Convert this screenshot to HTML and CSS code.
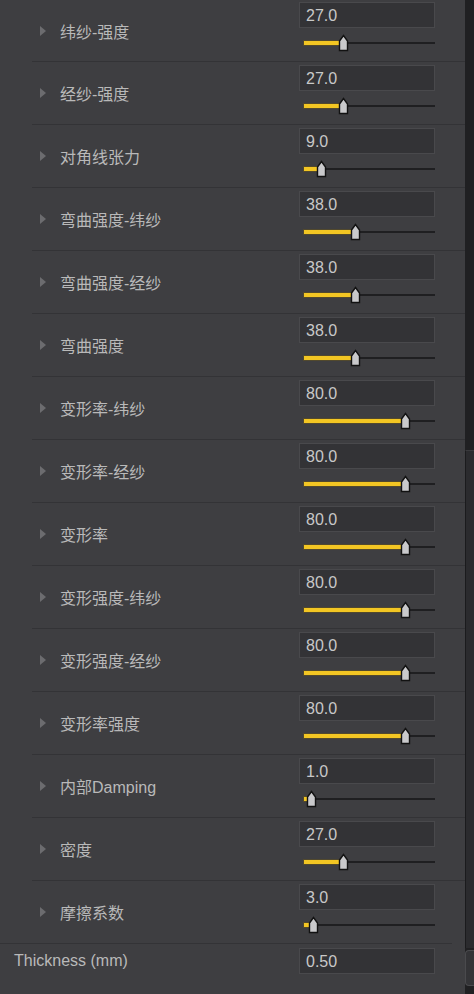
FILE: index.html
```html
<!DOCTYPE html>
<html lang="zh">
    <head>
        <title>Fabric Properties</title>
        <meta charset="utf-8" name="viewport" content="width=device-width, initial-scale=1">
        <link rel="stylesheet" href="styles.css">
    </head>
    <body>
        <div id="page">
        <div class="panel">
            <div class="group">
                <div class="row">
                    <div class="name"><span class="arrow"></span>纬纱-强度</div>
                    <div class="ctl">
                        <div class="box">27.0</div>
                        <div class="slider"><div class="fill" style="width:39px"></div><svg class="thumb" style="left:34px" width="11" height="18" viewBox="0 0 11 18"><polygon points="1.5,7 5.5,1.5 9.5,7 9.5,16.5 1.5,16.5"/></svg></div>
                    </div>
                </div>
                <div class="row">
                    <div class="name"><span class="arrow"></span>经纱-强度</div>
                    <div class="ctl">
                        <div class="box">27.0</div>
                        <div class="slider"><div class="fill" style="width:39px"></div><svg class="thumb" style="left:34px" width="11" height="18" viewBox="0 0 11 18"><polygon points="1.5,7 5.5,1.5 9.5,7 9.5,16.5 1.5,16.5"/></svg></div>
                    </div>
                </div>
                <div class="row">
                    <div class="name"><span class="arrow"></span>对角线张力</div>
                    <div class="ctl">
                        <div class="box">9.0</div>
                        <div class="slider"><div class="fill" style="width:17px"></div><svg class="thumb" style="left:12px" width="11" height="18" viewBox="0 0 11 18"><polygon points="1.5,7 5.5,1.5 9.5,7 9.5,16.5 1.5,16.5"/></svg></div>
                    </div>
                </div>
                <div class="row">
                    <div class="name"><span class="arrow"></span>弯曲强度-纬纱</div>
                    <div class="ctl">
                        <div class="box">38.0</div>
                        <div class="slider"><div class="fill" style="width:51px"></div><svg class="thumb" style="left:46px" width="11" height="18" viewBox="0 0 11 18"><polygon points="1.5,7 5.5,1.5 9.5,7 9.5,16.5 1.5,16.5"/></svg></div>
                    </div>
                </div>
                <div class="row">
                    <div class="name"><span class="arrow"></span>弯曲强度-经纱</div>
                    <div class="ctl">
                        <div class="box">38.0</div>
                        <div class="slider"><div class="fill" style="width:51px"></div><svg class="thumb" style="left:46px" width="11" height="18" viewBox="0 0 11 18"><polygon points="1.5,7 5.5,1.5 9.5,7 9.5,16.5 1.5,16.5"/></svg></div>
                    </div>
                </div>
                <div class="row">
                    <div class="name"><span class="arrow"></span>弯曲强度</div>
                    <div class="ctl">
                        <div class="box">38.0</div>
                        <div class="slider"><div class="fill" style="width:51px"></div><svg class="thumb" style="left:46px" width="11" height="18" viewBox="0 0 11 18"><polygon points="1.5,7 5.5,1.5 9.5,7 9.5,16.5 1.5,16.5"/></svg></div>
                    </div>
                </div>
                <div class="row">
                    <div class="name"><span class="arrow"></span>变形率-纬纱</div>
                    <div class="ctl">
                        <div class="box">80.0</div>
                        <div class="slider"><div class="fill" style="width:101px"></div><svg class="thumb" style="left:96px" width="11" height="18" viewBox="0 0 11 18"><polygon points="1.5,7 5.5,1.5 9.5,7 9.5,16.5 1.5,16.5"/></svg></div>
                    </div>
                </div>
                <div class="row">
                    <div class="name"><span class="arrow"></span>变形率-经纱</div>
                    <div class="ctl">
                        <div class="box">80.0</div>
                        <div class="slider"><div class="fill" style="width:101px"></div><svg class="thumb" style="left:96px" width="11" height="18" viewBox="0 0 11 18"><polygon points="1.5,7 5.5,1.5 9.5,7 9.5,16.5 1.5,16.5"/></svg></div>
                    </div>
                </div>
                <div class="row">
                    <div class="name"><span class="arrow"></span>变形率</div>
                    <div class="ctl">
                        <div class="box">80.0</div>
                        <div class="slider"><div class="fill" style="width:101px"></div><svg class="thumb" style="left:96px" width="11" height="18" viewBox="0 0 11 18"><polygon points="1.5,7 5.5,1.5 9.5,7 9.5,16.5 1.5,16.5"/></svg></div>
                    </div>
                </div>
                <div class="row">
                    <div class="name"><span class="arrow"></span>变形强度-纬纱</div>
                    <div class="ctl">
                        <div class="box">80.0</div>
                        <div class="slider"><div class="fill" style="width:101px"></div><svg class="thumb" style="left:96px" width="11" height="18" viewBox="0 0 11 18"><polygon points="1.5,7 5.5,1.5 9.5,7 9.5,16.5 1.5,16.5"/></svg></div>
                    </div>
                </div>
                <div class="row">
                    <div class="name"><span class="arrow"></span>变形强度-经纱</div>
                    <div class="ctl">
                        <div class="box">80.0</div>
                        <div class="slider"><div class="fill" style="width:101px"></div><svg class="thumb" style="left:96px" width="11" height="18" viewBox="0 0 11 18"><polygon points="1.5,7 5.5,1.5 9.5,7 9.5,16.5 1.5,16.5"/></svg></div>
                    </div>
                </div>
                <div class="row">
                    <div class="name"><span class="arrow"></span>变形率强度</div>
                    <div class="ctl">
                        <div class="box">80.0</div>
                        <div class="slider"><div class="fill" style="width:101px"></div><svg class="thumb" style="left:96px" width="11" height="18" viewBox="0 0 11 18"><polygon points="1.5,7 5.5,1.5 9.5,7 9.5,16.5 1.5,16.5"/></svg></div>
                    </div>
                </div>
                <div class="row">
                    <div class="name"><span class="arrow"></span>内部Damping</div>
                    <div class="ctl">
                        <div class="box">1.0</div>
                        <div class="slider"><div class="fill" style="width:6px"></div><svg class="thumb" style="left:2px" width="11" height="18" viewBox="0 0 11 18"><polygon points="1.5,7 5.5,1.5 9.5,7 9.5,16.5 1.5,16.5"/></svg></div>
                    </div>
                </div>
                <div class="row">
                    <div class="name"><span class="arrow"></span>密度</div>
                    <div class="ctl">
                        <div class="box">27.0</div>
                        <div class="slider"><div class="fill" style="width:39px"></div><svg class="thumb" style="left:34px" width="11" height="18" viewBox="0 0 11 18"><polygon points="1.5,7 5.5,1.5 9.5,7 9.5,16.5 1.5,16.5"/></svg></div>
                    </div>
                </div>
                <div class="row">
                    <div class="name"><span class="arrow"></span>摩擦系数</div>
                    <div class="ctl">
                        <div class="box">3.0</div>
                        <div class="slider"><div class="fill" style="width:8px"></div><svg class="thumb" style="left:4px" width="11" height="18" viewBox="0 0 11 18"><polygon points="1.5,7 5.5,1.5 9.5,7 9.5,16.5 1.5,16.5"/></svg></div>
                    </div>
                </div>
            </div>

            <div class="row top">
                <div class="name">Thickness (mm)</div>
                <div class="ctl">
                    <div class="box">0.50</div>
                </div>
            </div>
        </div>

        <div class="scroll">
            <div class="s-top"></div>
            <div class="s-track"></div>
            <div class="s-end"></div>
        </div>
        </div>
    </body>
</html>
```

FILE: styles.css
```css
body{
    margin: 0;
    background: #3e3e41;
    font-family: "Liberation Sans", "Noto Sans CJK SC", sans-serif;
    font-size: 16px;
    color: #b9b9b9;
}
#page{
    display: flex;
    height: 994px;
    overflow: hidden;
}
.panel{
    flex: 1;
}
.group .row{
    margin-left: 32px;
    border-bottom: 1px solid #333336;
    height: 62px;
}
.group .row:first-child{
    height: 61px;
}
.group .row:last-child{
    border-bottom: none;
}
.row{
    display: grid;
    grid-template-columns: 267px 136px;
}
.name{
    display: flex;
    align-items: center;
    padding-left: 8px;
    gap: 14px;
}
.arrow{
    width: 0;
    height: 0;
    border-top: 5px solid transparent;
    border-bottom: 5px solid transparent;
    border-left: 6px solid #6c6c6f;
}
.ctl{
    padding-top: 3px;
}
.group .row:first-child .ctl{
    padding-top: 2px;
}
.box{
    height: 26px;
    box-sizing: border-box;
    border: 1px solid #49494c;
    background: #333336;
    padding-left: 6px;
    line-height: 25px;
    font-size: 16px;
    color: #c8c8c8;
}
.slider{
    position: relative;
    margin: 6px 0 0 5px;
    width: 131px;
    height: 18px;
}
.slider::before{
    content: "";
    position: absolute;
    left: 0;
    right: 0;
    top: 8px;
    height: 2px;
    background: #1f1f21;
}
.fill{
    position: absolute;
    left: 0;
    top: 7px;
    height: 4px;
    background: #f3c623;
    box-shadow: 0 0 0 1px rgba(120, 95, 10, 0.35);
}
.thumb{
    position: absolute;
    top: 0;
}
.thumb polygon{
    fill: #c9c9cb;
    stroke: #121212;
    stroke-width: 1.4;
}

/* last property sits outside the group */
.row.top{
    border-top: 1px solid #333336;
    width: 452px;
    height: 40px;
    grid-template-columns: 299px 136px;
}
.row.top .name{
    padding-left: 14px;
    align-items: flex-start;
    padding-top: 8px;
}
.row.top .ctl{
    padding-top: 4px;
}

.scroll{
    width: 9px;
    display: flex;
    flex-direction: column;
    background: #202022;
}
.s-top{
    height: 450px;
}
.s-track{
    flex: 1;
    background: #2b2b2e;
    border-left: 1px solid #1b1b1d;
    border-top: 1px solid #3a3a3d;
}
.s-end{
    height: 34px;
    margin: 2px 0 8px;
    border: 1px solid #4a4a4d;
    border-right: none;
    border-radius: 4px 0 0 4px;
    background: #343437;
}
```
